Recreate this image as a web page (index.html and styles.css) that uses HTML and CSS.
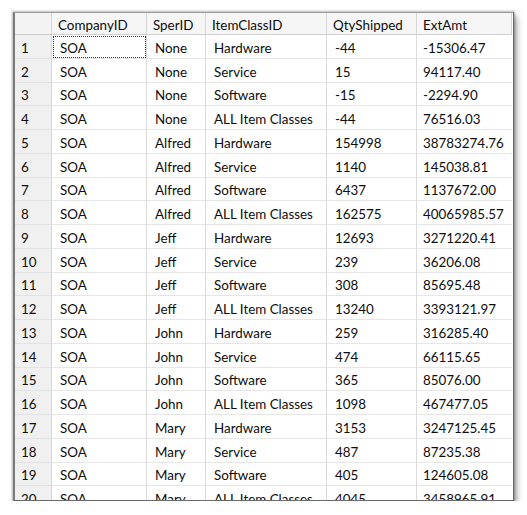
FILE: index.html
```html
<!DOCTYPE html>
<html>
<head>
<meta charset="utf-8">
<link rel="stylesheet" href="styles.css">
</head>
<body>
<div class="frame">
  <div class="grid">
    <div class="hd corner"></div>
    <div class="hd">CompanyID</div>
    <div class="hd">SperID</div>
    <div class="hd">ItemClassID</div>
    <div class="hd">QtyShipped</div>
    <div class="hd">ExtAmt</div>

    <div class="rn">1</div><div class="c focus">SOA</div><div class="c">None</div><div class="c">Hardware</div><div class="c">-44</div><div class="c">-15306.47</div>
    <div class="rn">2</div><div class="c">SOA</div><div class="c">None</div><div class="c">Service</div><div class="c">15</div><div class="c">94117.40</div>
    <div class="rn">3</div><div class="c">SOA</div><div class="c">None</div><div class="c">Software</div><div class="c">-15</div><div class="c">-2294.90</div>
    <div class="rn">4</div><div class="c">SOA</div><div class="c">None</div><div class="c">ALL Item Classes</div><div class="c">-44</div><div class="c">76516.03</div>
    <div class="rn">5</div><div class="c">SOA</div><div class="c">Alfred</div><div class="c">Hardware</div><div class="c">154998</div><div class="c">38783274.76</div>
    <div class="rn">6</div><div class="c">SOA</div><div class="c">Alfred</div><div class="c">Service</div><div class="c">1140</div><div class="c">145038.81</div>
    <div class="rn">7</div><div class="c">SOA</div><div class="c">Alfred</div><div class="c">Software</div><div class="c">6437</div><div class="c">1137672.00</div>
    <div class="rn">8</div><div class="c">SOA</div><div class="c">Alfred</div><div class="c">ALL Item Classes</div><div class="c">162575</div><div class="c">40065985.57</div>
    <div class="rn">9</div><div class="c">SOA</div><div class="c">Jeff</div><div class="c">Hardware</div><div class="c">12693</div><div class="c">3271220.41</div>
    <div class="rn">10</div><div class="c">SOA</div><div class="c">Jeff</div><div class="c">Service</div><div class="c">239</div><div class="c">36206.08</div>
    <div class="rn">11</div><div class="c">SOA</div><div class="c">Jeff</div><div class="c">Software</div><div class="c">308</div><div class="c">85695.48</div>
    <div class="rn">12</div><div class="c">SOA</div><div class="c">Jeff</div><div class="c">ALL Item Classes</div><div class="c">13240</div><div class="c">3393121.97</div>
    <div class="rn">13</div><div class="c">SOA</div><div class="c">John</div><div class="c">Hardware</div><div class="c">259</div><div class="c">316285.40</div>
    <div class="rn">14</div><div class="c">SOA</div><div class="c">John</div><div class="c">Service</div><div class="c">474</div><div class="c">66115.65</div>
    <div class="rn">15</div><div class="c">SOA</div><div class="c">John</div><div class="c">Software</div><div class="c">365</div><div class="c">85076.00</div>
    <div class="rn">16</div><div class="c">SOA</div><div class="c">John</div><div class="c">ALL Item Classes</div><div class="c">1098</div><div class="c">467477.05</div>
    <div class="rn">17</div><div class="c">SOA</div><div class="c">Mary</div><div class="c">Hardware</div><div class="c">3153</div><div class="c">3247125.45</div>
    <div class="rn">18</div><div class="c">SOA</div><div class="c">Mary</div><div class="c">Service</div><div class="c">487</div><div class="c">87235.38</div>
    <div class="rn">19</div><div class="c">SOA</div><div class="c">Mary</div><div class="c">Software</div><div class="c">405</div><div class="c">124605.08</div>
    <div class="rn">20</div><div class="c">SOA</div><div class="c">Mary</div><div class="c">ALL Item Classes</div><div class="c">4045</div><div class="c">3458965.91</div>
  </div>
</div>
</body>
</html>
```

FILE: styles.css
```css
html, body {
  margin: 0;
  background: #ffffff;
}
body {
  padding: 12px 0 0 13px;
  font-family: Lato, "Liberation Sans", sans-serif;
  font-size: 13.4px;
  color: #0d0d0d;
}
.frame {
  width: 498px;
  height: 487px;
  border: 1px solid #6a6a6a;
  border-left: 2px solid #7a7a7a;
  border-top-color: #9a9a9a;
  overflow: hidden;
  background: #ffffff;
  box-shadow: 0 0 2px 1px rgba(0,0,0,0.25), 3px 4px 6px rgba(0,0,0,0.35);
}
.grid {
  display: grid;
  grid-template-columns: 37px 95px 59px 121px 90px 95px;
  grid-template-rows: 22px;
  grid-auto-rows: 23.75px;
}
.hd {
  background: #f6f6f6;
  border-right: 1px solid #d6d6d6;
  border-bottom: 1px solid #cfcfcf;
  padding: 2px 0 0 6px;
  display: flex;
  align-items: center;
  white-space: nowrap;
  overflow: hidden;
}
.hd:last-child {
  border-right: none;
}
.corner {
  background: #f3f3f3;
}
.rn {
  background: #f0f0f0;
  border-right: 1px solid #d6d6d6;
  border-bottom: 1px solid #e2e2e2;
  padding: 3px 0 0 6px;
  display: flex;
  align-items: center;
}
.c {
  border-right: 1px solid #dadada;
  border-bottom: 1px solid #e6e6e6;
  padding: 3px 0 0 8px;
  display: flex;
  align-items: center;
  white-space: nowrap;
  overflow: hidden;
}
.c:nth-child(6n) {
  border-right: none;
  padding-left: 6px;
}
.focus {
  outline: 1px dotted #333333;
  outline-offset: -2px;
}
```
